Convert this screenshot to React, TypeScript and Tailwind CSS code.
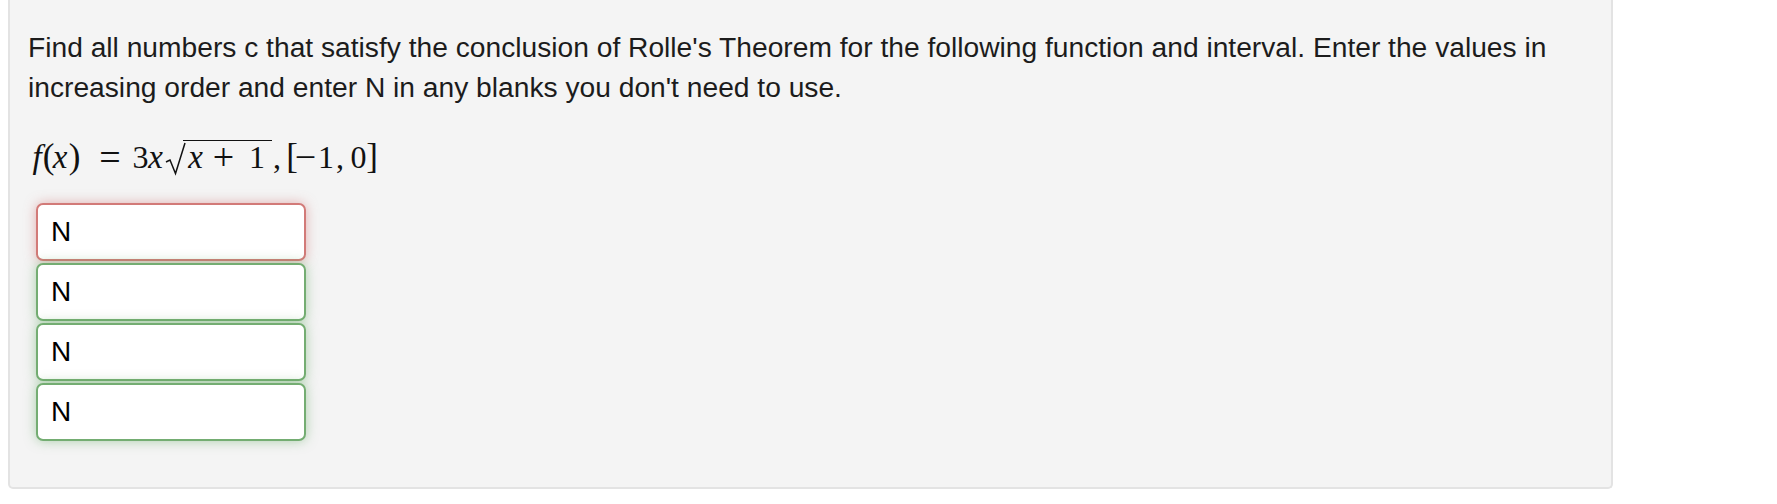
import React from 'react';

type Blank = { id: number; value: string; state: 'wrong' | 'right' };

const blanks: Blank[] = [
  { id: 1, value: 'N', state: 'wrong' },
  { id: 2, value: 'N', state: 'right' },
  { id: 3, value: 'N', state: 'right' },
  { id: 4, value: 'N', state: 'right' },
];

// one glyph of the formula, centred in a box as wide as its ink in the typeset original
function T({ cls, children }: { cls: string; children: React.ReactNode }) {
  return <span className={`inline-flex justify-center ${cls}`}>{children}</span>;
}

const letter = 'italic text-[33px] leading-[28px]';
const digit = 'text-[32px] leading-[28px]';
const fence = 'text-[35px] leading-[28px]';
const op = 'text-[38px] leading-[28px] translate-y-[2px]';

function Sqrt({ children }: { children: React.ReactNode }) {
  // radical sign drawn as a stroke, the bar is the radicand's top border
  return (
    <span className="inline-flex items-baseline ml-[1px]">
      <svg width="22" height="34" viewBox="0 0 22 34" className="self-end mb-[-5px] -mr-[3px]">
        <path d="M2 20 L6 18 L11.5 31.5 L21 1" fill="none" stroke="#111" strokeWidth="1.5" />
      </svg>
      <span className="inline-flex items-baseline border-t-[1.5px] border-[#111] pl-[5px] pr-[8px]">
        {children}
      </span>
    </span>
  );
}

function MathLine() {
  return (
    <div className="flex items-baseline h-[34px] whitespace-nowrap text-[#111] font-['Liberation_Serif','DejaVu_Serif',serif]">
      <T cls={`${letter} w-[14px] ml-[2px]`}>f</T>
      <T cls={`${fence} w-[7px] ml-[1px]`}>(</T>
      <T cls={`${letter} w-[14px] ml-[1px]`}>x</T>
      <T cls={`${fence} w-[9px] ml-[3px]`}>)</T>
      <T cls={`${op} w-[22px] ml-[20px]`}>=</T>
      <T cls={`${digit} w-[13px] ml-[13px]`}>3</T>
      <T cls={`${letter} w-[15px] ml-[1px]`}>x</T>
      <Sqrt>
        <T cls={`${letter} w-[15px]`}>x</T>
        <T cls={`${op} w-[21px] ml-[10px]`}>+</T>
        <T cls={`${digit} w-[14px] ml-[16px]`}>1</T>
      </Sqrt>
      <T cls={`${digit} w-[4px] ml-[3px]`}>,</T>
      <T cls={`${fence} w-[6px] ml-[10px]`}>[</T>
      <T cls={`${op} w-[17px] ml-[2px]`}>−</T>
      <T cls={`${digit} w-[14px] ml-[5px]`}>1</T>
      <T cls={`${digit} w-[4px] ml-[5px]`}>,</T>
      <T cls={`${digit} w-[15px] ml-[9px]`}>0</T>
      <T cls={`${fence} w-[6px] ml-[3px]`}>]</T>
    </div>
  );
}

export default function App() {
  return (
    <div className="min-h-[504px] bg-white font-['Liberation_Sans',Arial,sans-serif]">
      <div className="ml-[8px] w-[1605px] h-[489px] bg-[#f4f4f4] border-x-2 border-b-2 border-[#e3e3e3] rounded-b-[5px] px-[18px] pt-[27px]">
        <p className="w-[1540px] text-[28.2px] leading-[40px] text-[#1c1c1c]">
          Find all numbers c that satisfy the conclusion of Rolle's Theorem for the following function and
          interval. Enter the values in increasing order and enter N in any blanks you don't need to use.
        </p>
        <div className="mt-[33px]">
          <MathLine />
        </div>
        <div className="mt-[29px] ml-[8px] flex flex-col gap-[2px]">
          {blanks.map((b) => (
            <input
              key={b.id}
              readOnly
              value={b.value}
              className={
                'w-[270px] h-[58px] rounded-[7px] bg-white pl-[13px] text-[28px] text-black outline-none border-2 ' +
                (b.state === 'wrong'
                  ? 'border-[#d27a78] shadow-[0_0_12px_rgba(210,110,110,0.5)]'
                  : 'border-[#74ad72] shadow-[0_0_12px_rgba(100,170,100,0.5)]')
              }
            />
          ))}
        </div>
      </div>
    </div>
  );
}
